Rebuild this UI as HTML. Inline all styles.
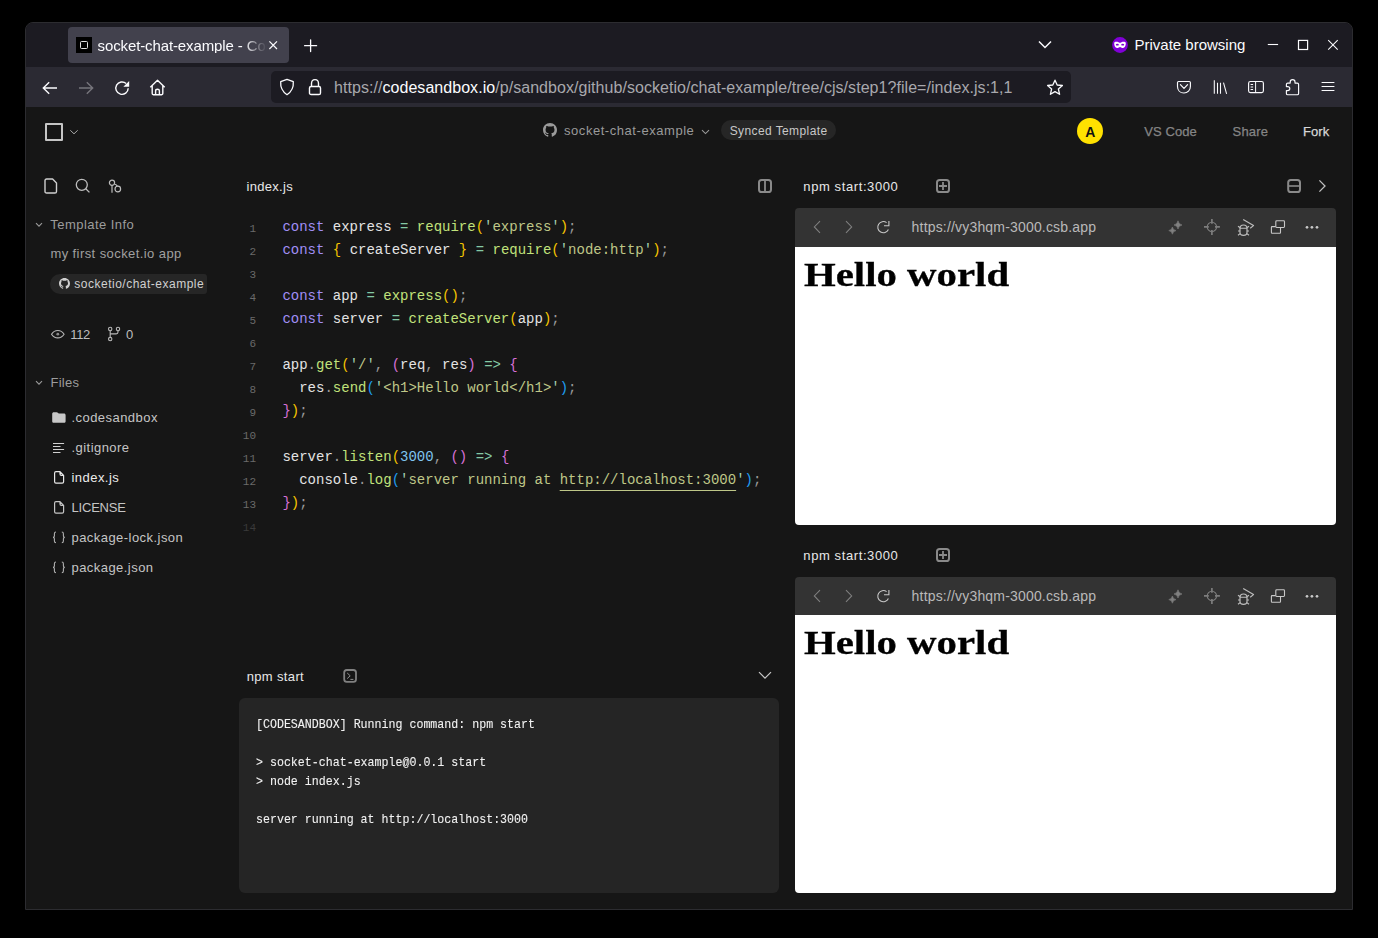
<!DOCTYPE html>
<html><head><meta charset="utf-8"><title>socket-chat-example - CodeSandbox</title>
<style>
html,body{margin:0;padding:0;}
body{width:1378px;height:938px;background:#000;position:relative;overflow:hidden;font-family:"Liberation Sans", sans-serif;}
.t{position:absolute;line-height:1;white-space:pre;}
.r{position:absolute;}
.m{font-family:"Liberation Mono", monospace;}
.s{font-family:"Liberation Serif", serif;}
.i{position:absolute;overflow:visible;}
</style></head><body>
<div class="r" style="left:25px;top:22px;width:1328px;height:888px;background:#161616;border:1px solid #2c2c30;box-sizing:border-box;border-radius:8px 8px 0 0;"></div>
<div class="r" style="left:26px;top:23px;width:1326px;height:44px;background:#1c1b22;border-radius:7px 7px 0 0;"></div>
<div class="r" style="left:26px;top:67px;width:1326px;height:40px;background:#2b2a33;"></div>
<div class="r" style="left:68px;top:27px;width:221px;height:36px;background:#42414d;border-radius:4px;"></div>
<div class="r" style="left:76px;top:37px;width:16px;height:16px;background:#000;"></div>
<div class="r" style="left:80px;top:41px;width:8px;height:8px;background:transparent;border:1.5px solid #e0e0e0;border-radius:1.5px;box-sizing:border-box;"></div>
<div class="t" style="left:97.60px;top:38px;font-size:15px;color:#fbfbfe;letter-spacing:-0.12px;width:169px;overflow:hidden;-webkit-mask-image:linear-gradient(90deg,#000 0,#000 146px,rgba(0,0,0,0.35) 160px,transparent 169px);">socket-chat-example - Cod</div>
<svg class="i" style="left:266px;top:39px;" width="14" height="13" viewBox="266 39 14 13"><path d="M269.4 41.3L277 49M277 41.3L269.4 49" stroke="#fbfbfe" stroke-width="1.2" fill="none"/></svg>
<svg class="i" style="left:302px;top:37px;" width="18" height="18" viewBox="302 37 18 18"><path d="M310.6 39.8V51.6M304.6 45.7H316.6" stroke="#fbfbfe" stroke-width="1.3" stroke-linecap="round" fill="none"/></svg>
<svg class="i" style="left:1038px;top:40px;" width="14" height="9" viewBox="0 0 14 9"><path d="M1 1.5L7 7.5L13 1.5" stroke="#fbfbfe" stroke-width="1.5" fill="none"/></svg>
<svg class="i" style="left:1112px;top:37px;" width="16" height="16" viewBox="0 0 16 16"><circle cx="8" cy="8" r="7.9" fill="#8000d7"/><path d="M2.2 6.3C2.2 5.2 3.2 4.8 4.5 4.8C6 4.8 7 5.5 8 5.9C9 5.5 10 4.8 11.5 4.8C12.8 4.8 13.8 5.2 13.8 6.3C13.8 8.6 12.8 11.1 11 11.1C9.5 11.1 8.8 10 8 10C7.2 10 6.5 11.1 5 11.1C3.2 11.1 2.2 8.6 2.2 6.3Z" fill="#fff"/><ellipse cx="5.3" cy="7.7" rx="1.5" ry="0.85" fill="#8000d7"/><ellipse cx="10.7" cy="7.7" rx="1.5" ry="0.85" fill="#8000d7"/></svg>
<div class="t" style="left:1134.50px;top:37px;font-size:15px;color:#fbfbfe;">Private browsing</div>
<svg class="i" style="left:1265px;top:42px;" width="16" height="5" viewBox="1265 42 16 5"><path d="M1267.8 44.5H1278.1" stroke="#fbfbfe" stroke-width="1.1"/></svg>
<svg class="i" style="left:1296px;top:38px;" width="15" height="15" viewBox="1296 38 15 15"><rect x="1298.5" y="40.4" width="9.1" height="9.1" stroke="#fbfbfe" stroke-width="1.2" fill="none"/></svg>
<svg class="i" style="left:1326px;top:38px;" width="15" height="15" viewBox="1326 38 15 15"><path d="M1328.2 40.2L1337.7 49.7M1337.7 40.2L1328.2 49.7" stroke="#fbfbfe" stroke-width="1.05" fill="none"/></svg>
<svg class="i" style="left:42px;top:81px;" width="16" height="14" viewBox="0 0 16 14"><path d="M15 7H1.8M7.2 1.2L1.3 7L7.2 12.8" stroke="#fbfbfe" stroke-width="1.4" fill="none"/></svg>
<svg class="i" style="left:78px;top:81px;" width="16" height="14" viewBox="0 0 16 14"><path d="M1 7H14.2M8.8 1.2L14.7 7L8.8 12.8" stroke="#76757c" stroke-width="1.4" fill="none"/></svg>
<svg class="i" style="left:114px;top:80px;" width="16" height="16" viewBox="0 0 16 16"><path d="M14.2 8.3A6.2 6.2 0 1 1 12.2 3.6" stroke="#fbfbfe" stroke-width="1.4" fill="none"/><path d="M15.2 1V6.8H9.4Z" fill="#fbfbfe"/></svg>
<svg class="i" style="left:149px;top:79px;" width="17" height="17" viewBox="0 0 17 17"><path d="M1.3 8.2L8.5 1.3L15.7 8.2M3.2 6.6V14.6C3.2 15.3 3.6 15.7 4.3 15.7H12.7C13.4 15.7 13.8 15.3 13.8 14.6V6.6M6.6 15.7V11.8C6.6 10.8 7.4 10.2 8.5 10.2C9.6 10.2 10.4 10.8 10.4 11.8V15.7" stroke="#fbfbfe" stroke-width="1.4" fill="none" stroke-linejoin="round"/></svg>
<div class="r" style="left:271px;top:71px;width:800px;height:32px;background:#1c1b22;border-radius:5px;"></div>
<svg class="i" style="left:279px;top:78px;" width="16" height="18" viewBox="0 0 16 18"><path d="M8 1.3L14.3 3.6C14.7 9 12.6 13.6 8 16.7C3.4 13.6 1.3 9 1.7 3.6Z" stroke="#fbfbfe" stroke-width="1.3" fill="none" stroke-linejoin="round"/></svg>
<svg class="i" style="left:308px;top:78px;" width="14" height="18" viewBox="0 0 14 18"><path d="M3.5 8.6V5.6C3.5 3.2 5 1.6 7 1.6C9 1.6 10.5 3.2 10.5 5.6V8.6" stroke="#fbfbfe" stroke-width="1.4" fill="none"/><rect x="1.5" y="8.5" width="11" height="8" rx="1.6" stroke="#fbfbfe" stroke-width="1.4" fill="none"/></svg>
<div class="t" style="left:334.00px;top:80px;font-size:16px;color:#fbfbfe;letter-spacing:0.05px;"><span style="color:#a8a8ad">https://</span>codesandbox.io<span style="color:#a8a8ad">/p/sandbox/github/socketio/chat-example/tree/cjs/step1?file=/index.js:1,1</span></div>
<svg class="i" style="left:1046px;top:79px;" width="18" height="17" viewBox="0 0 18 17"><path d="M9 1.2L11.2 6L16.4 6.5L12.4 10L13.6 15.3L9 12.6L4.4 15.3L5.6 10L1.6 6.5L6.8 6Z" stroke="#fbfbfe" stroke-width="1.3" fill="none" stroke-linejoin="round"/></svg>
<svg class="i" style="left:1174px;top:78px;" width="20" height="18" viewBox="1174 78 20 18"><path d="M1178.6 81.5H1189.3C1190 81.5 1190.4 81.9 1190.4 82.6V86.4C1190.4 90.3 1187.6 93 1183.9 93C1180.2 93 1177.5 90.3 1177.5 86.4V82.6C1177.5 81.9 1177.9 81.5 1178.6 81.5Z" stroke="#fbfbfe" stroke-width="1.15" fill="none"/><path d="M1180.4 84.6L1184 88.4L1187.6 84.6" stroke="#fbfbfe" stroke-width="1.15" fill="none" stroke-linecap="round"/></svg>
<svg class="i" style="left:1212px;top:78px;" width="18" height="18" viewBox="1212 78 18 18"><path d="M1214.3 80.2V93.8M1217.5 82.8V93.8M1220.5 82.8V93.8M1223.5 82.6L1226.6 93.8" stroke="#fbfbfe" stroke-width="1.05" fill="none"/></svg>
<svg class="i" style="left:1246px;top:79px;" width="20" height="16" viewBox="1246 79 20 16"><rect x="1248.6" y="81.5" width="14.8" height="11.1" rx="1.8" stroke="#fbfbfe" stroke-width="1.15" fill="none"/><path d="M1255.6 81.5V92.6M1250.6 84.5H1253.1M1250.6 87H1253.1M1250.6 89.5H1253.1" stroke="#fbfbfe" stroke-width="1" fill="none"/></svg>
<svg class="i" style="left:1284px;top:77px;" width="17" height="20" viewBox="1284 77 17 20"><path d="M1290.2 83.1V81.9C1290.2 80.5 1291.2 79.6 1292.6 79.6C1294 79.6 1295 80.5 1295 81.9V83.1H1297.3C1298.1 83.1 1298.6 83.6 1298.6 84.4V93.4C1298.6 94.2 1298.1 94.7 1297.3 94.7H1287.7C1286.9 94.7 1286.4 94.2 1286.4 93.4V90.6H1287.6C1288.9 90.6 1289.8 89.7 1289.8 88.6C1289.8 87.5 1288.9 86.6 1287.6 86.6H1286.4V84.4C1286.4 83.6 1286.9 83.1 1287.7 83.1Z" stroke="#fbfbfe" stroke-width="1.15" fill="none" stroke-linejoin="round"/></svg>
<svg class="i" style="left:1320px;top:80px;" width="16" height="13" viewBox="1320 80 16 13"><path d="M1322 82.5H1334M1322 86.5H1334M1322 90.5H1334" stroke="#fbfbfe" stroke-width="1.1" stroke-linecap="round"/></svg>
<div class="r" style="left:45px;top:123px;width:18px;height:18px;background:transparent;border:2px solid #c5c5c5;box-sizing:border-box;border-radius:1px;"></div>
<svg class="i" style="left:68px;top:127px;" width="12" height="10" viewBox="68 127 12 10"><path d="M70.3 130.3L74 133.8L77.7 130.3" stroke="#b0b0b0" stroke-width="0.95" fill="none"/></svg>
<svg class="i" style="left:543px;top:123px;" width="14" height="14" viewBox="0 0 16 16"><path fill="#9a9a9a" d="M8 0C3.58 0 0 3.58 0 8c0 3.54 2.29 6.53 5.47 7.59.4.07.55-.17.55-.38 0-.19-.01-.82-.01-1.49-2.01.37-2.53-.49-2.69-.94-.09-.23-.48-.94-.82-1.13-.28-.15-.68-.52-.01-.53.63-.01 1.08.58 1.23.82.72 1.21 1.87.87 2.33.66.07-.52.28-.87.51-1.07-1.78-.2-3.640-.89-3.64-3.95 0-.87.31-1.59.82-2.15-.08-.2-.36-1.02.08-2.12 0 0 .67-.21 2.2.82.64-.18 1.32-.27 2-.27.68 0 1.36.09 2 .27 1.53-1.040 2.2-.82 2.2-.82.44 1.1.16 1.92.08 2.12.51.56.82 1.27.82 2.15 0 3.07-1.87 3.75-3.65 3.95.29.25.54.73.54 1.48 0 1.07-.01 1.93-.01 2.2 0 .21.15.46.55.38A8.013 8.013 0 0016 8c0-4.42-3.58-8-8-8z"/></svg>
<div class="t" style="left:564.00px;top:124px;font-size:13px;color:#9a9a9a;letter-spacing:0.55px;">socket-chat-example</div>
<svg class="i" style="left:701px;top:129px;" width="9" height="6" viewBox="0 0 9 6"><path d="M1 1.2L4.5 4.6L8 1.2" stroke="#999" stroke-width="1.1" fill="none"/></svg>
<div class="r" style="left:721px;top:120px;width:115px;height:20px;background:#262626;border-radius:10px;"></div>
<div class="t" style="left:729.70px;top:125px;font-size:12px;color:#c8c8c8;letter-spacing:0.4px;">Synced Template</div>
<div class="r" style="left:1077px;top:118px;width:26px;height:26px;border-radius:13px;background:#ffe100;"></div>
<div class="t" style="left:1085.20px;top:125px;font-size:14px;color:#111;font-weight:700;">A</div>
<div class="t" style="left:1144.20px;top:125px;font-size:13px;color:#858585;letter-spacing:0.1px;-webkit-text-stroke:0.25px #858585;">VS Code</div>
<div class="t" style="left:1232.60px;top:125px;font-size:13px;color:#858585;letter-spacing:0.15px;-webkit-text-stroke:0.25px #858585;">Share</div>
<div class="t" style="left:1303.00px;top:125px;font-size:13px;color:#d6d6d6;letter-spacing:0.05px;-webkit-text-stroke:0.25px #d6d6d6;">Fork</div>
<svg class="i" style="left:44px;top:178px;" width="14" height="16" viewBox="0 0 14 16"><path d="M2.6 1H8.6L12.5 4.9V13.4C12.5 14.4 11.9 15 10.9 15H2.6C1.6 15 1 14.4 1 13.4V2.6C1 1.6 1.6 1 2.6 1Z" stroke="#cfcfcf" stroke-width="1.4" fill="none" stroke-linejoin="round"/></svg>
<svg class="i" style="left:75px;top:178px;" width="16" height="16" viewBox="0 0 16 16"><circle cx="6.8" cy="6.8" r="5.5" stroke="#bdbdbd" stroke-width="1.3" fill="none"/><path d="M10.8 10.8L14.4 14.4" stroke="#bdbdbd" stroke-width="1.3"/></svg>
<svg class="i" style="left:108px;top:179px;" width="15" height="15" viewBox="0 0 15 15"><circle cx="4" cy="3.8" r="2.6" stroke="#bdbdbd" stroke-width="1.2" fill="none"/><circle cx="9.8" cy="10" r="2.8" stroke="#bdbdbd" stroke-width="1.2" fill="none"/><path d="M4 6.4V13.8M6.4 5C8 5.5 9 6.5 9.3 7.2" stroke="#bdbdbd" stroke-width="1.2" fill="none"/></svg>
<svg class="i" style="left:34.5px;top:221.5px;" width="8" height="6" viewBox="0 0 8 6"><path d="M1 1.2L4 4.2L7 1.2" stroke="#9a9a9a" stroke-width="1.1" fill="none"/></svg>
<div class="t" style="left:50.30px;top:218px;font-size:13px;color:#9c9c9c;letter-spacing:0.45px;">Template Info</div>
<div class="t" style="left:50.40px;top:247px;font-size:13px;color:#a0a0a0;letter-spacing:0.42px;">my first socket.io app</div>
<div class="r" style="left:50px;top:274px;width:157px;height:20px;background:#262626;border-radius:10px 3px 3px 10px;"></div>
<svg class="i" style="left:58.5px;top:278px;" width="11" height="11" viewBox="0 0 16 16"><path fill="#cfcfcf" d="M8 0C3.58 0 0 3.58 0 8c0 3.54 2.29 6.53 5.47 7.59.4.07.55-.17.55-.38 0-.19-.01-.82-.01-1.49-2.01.37-2.53-.49-2.69-.94-.09-.23-.48-.94-.82-1.13-.28-.15-.68-.52-.01-.53.63-.01 1.08.58 1.23.82.72 1.21 1.87.87 2.33.66.07-.52.28-.87.51-1.07-1.78-.2-3.640-.89-3.64-3.95 0-.87.31-1.59.82-2.15-.08-.2-.36-1.02.08-2.12 0 0 .67-.21 2.2.82.64-.18 1.32-.27 2-.27.68 0 1.36.09 2 .27 1.53-1.040 2.2-.82 2.2-.82.44 1.1.16 1.92.08 2.12.51.56.82 1.27.82 2.15 0 3.07-1.87 3.75-3.65 3.95.29.25.54.73.54 1.48 0 1.07-.01 1.93-.01 2.2 0 .21.15.46.55.38A8.013 8.013 0 0016 8c0-4.42-3.58-8-8-8z"/></svg>
<div class="t" style="left:74.30px;top:278px;font-size:12px;color:#d0d0d0;letter-spacing:0.5px;">socketio/chat-example</div>
<svg class="i" style="left:50px;top:328px;" width="16" height="13" viewBox="50 328 16 13"><path d="M51.5 334.2C53.2 331.6 55.2 330.5 57.8 330.5C60.4 330.5 62.4 331.6 64.1 334.2C62.4 336.8 60.4 337.9 57.8 337.9C55.2 337.9 53.2 336.8 51.5 334.2Z" stroke="#b5b5b5" stroke-width="1.1" fill="none"/><circle cx="57.8" cy="334.2" r="1.4" fill="#8a8a8a"/></svg>
<div class="t" style="left:70.30px;top:328px;font-size:13px;color:#bdbdbd;letter-spacing:-0.4px;">112</div>
<svg class="i" style="left:106px;top:325px;" width="16" height="18" viewBox="106 325 16 18"><circle cx="110.2" cy="329" r="1.7" stroke="#b8b8b8" stroke-width="1.1" fill="none"/><circle cx="118" cy="329" r="1.7" stroke="#b8b8b8" stroke-width="1.1" fill="none"/><circle cx="110.2" cy="339.1" r="1.7" stroke="#b8b8b8" stroke-width="1.1" fill="none"/><path d="M110.2 330.7V337.4M118 330.7V332C118 333.2 117.4 333.9 116.2 333.9H110.2" stroke="#b8b8b8" stroke-width="1.1" fill="none"/></svg>
<div class="t" style="left:126.00px;top:328px;font-size:13px;color:#bdbdbd;">0</div>
<svg class="i" style="left:34.5px;top:379.5px;" width="8" height="6" viewBox="0 0 8 6"><path d="M1 1.2L4 4.2L7 1.2" stroke="#9a9a9a" stroke-width="1.1" fill="none"/></svg>
<div class="t" style="left:50.40px;top:376px;font-size:13px;color:#9c9c9c;letter-spacing:0.3px;">Files</div>
<svg class="i" style="left:50px;top:410px;" width="18" height="16" viewBox="50 410 18 16"><path d="M53.8 412.2H56.6C57.2 412.2 57.5 412.4 57.9 412.8L58.7 413.6H64C64.9 413.6 65.6 414.3 65.6 415.2V421.2C65.6 422.1 64.9 422.8 64 422.8H53.8C52.9 422.8 52.2 422.1 52.2 421.2V413.8C52.2 412.9 52.9 412.2 53.8 412.2Z" fill="#c8c8c8"/></svg>
<div class="t" style="left:71.50px;top:411px;font-size:13px;color:#c5c5c5;letter-spacing:0.45px;">.codesandbox</div>
<svg class="i" style="left:50px;top:440px;" width="18" height="16" viewBox="50 440 18 16"><path d="M53 443.5H64.1M53 446.5H60.5M53 449.5H64.1M53 452.5H60.5" stroke="#d0d0d0" stroke-width="1"/></svg>
<div class="t" style="left:71.50px;top:441px;font-size:13px;color:#c5c5c5;letter-spacing:0.45px;">.gitignore</div>
<svg class="i" style="left:50px;top:468px;" width="18" height="18" viewBox="50 468 18 18"><path d="M56 471.7H60L63.6 475.3V481.8C63.6 482.7 63.1 483.2 62.2 483.2H56C55.1 483.2 54.6 482.7 54.6 481.8V473.1C54.6 472.2 55.1 471.7 56 471.7Z M60 471.7V474C60 474.8 60.5 475.3 61.3 475.3H63.6" stroke="#e6e6e6" stroke-width="1.2" fill="none" stroke-linejoin="round"/></svg>
<div class="t" style="left:71.50px;top:471px;font-size:13px;color:#ececec;letter-spacing:0.45px;">index.js</div>
<svg class="i" style="left:50px;top:498px;" width="18" height="18" viewBox="50 498 18 18"><path d="M56 501.7H60L63.6 505.3V511.8C63.6 512.7 63.1 513.2 62.2 513.2H56C55.1 513.2 54.6 512.7 54.6 511.8V503.1C54.6 502.2 55.1 501.7 56 501.7Z M60 501.7V504C60 504.8 60.5 505.3 61.3 505.3H63.6" stroke="#c4c4c4" stroke-width="1.2" fill="none" stroke-linejoin="round"/></svg>
<div class="t" style="left:71.50px;top:501px;font-size:13px;color:#c5c5c5;letter-spacing:-0.2px;">LICENSE</div>
<svg class="i" style="left:50px;top:530px;" width="18" height="16" viewBox="50 530 18 16"><path d="M56 532C54.6 532 54.4 532.5 54.4 533.7V536.1C54.4 537 54 537.4 53 537.4C54 537.4 54.4 537.8 54.4 538.7V541.1C54.4 542.3 54.6 542.8 56 542.8M61.8 532C63.2 532 63.4 532.5 63.4 533.7V536.1C63.4 537 63.8 537.4 64.8 537.4C63.8 537.4 63.4 537.8 63.4 538.7V541.1C63.4 542.3 63.2 542.8 61.8 542.8" stroke="#b0b0b0" stroke-width="1.1" fill="none"/></svg>
<div class="t" style="left:71.50px;top:531px;font-size:13px;color:#c5c5c5;letter-spacing:0.45px;">package-lock.json</div>
<svg class="i" style="left:50px;top:560px;" width="18" height="16" viewBox="50 560 18 16"><path d="M56 562C54.6 562 54.4 562.5 54.4 563.7V566.1C54.4 567 54 567.4 53 567.4C54 567.4 54.4 567.8 54.4 568.7V571.1C54.4 572.3 54.6 572.8 56 572.8M61.8 562C63.2 562 63.4 562.5 63.4 563.7V566.1C63.4 567 63.8 567.4 64.8 567.4C63.8 567.4 63.4 567.8 63.4 568.7V571.1C63.4 572.3 63.2 572.8 61.8 572.8" stroke="#b0b0b0" stroke-width="1.1" fill="none"/></svg>
<div class="t" style="left:71.50px;top:561px;font-size:13px;color:#c5c5c5;letter-spacing:0.45px;">package.json</div>
<div class="t" style="left:246.50px;top:180px;font-size:13px;color:#e8e8e8;letter-spacing:0.3px;">index.js</div>
<svg class="i" style="left:756px;top:177px;" width="18" height="18" viewBox="756 177 18 18"><rect x="759" y="180" width="12" height="12" rx="2.6" stroke="#8a8a8a" stroke-width="2" fill="none"/><path d="M765 180V192" stroke="#8a8a8a" stroke-width="1.8"/></svg>
<div class="t m" style="left:249.40px;top:224px;font-size:11px;color:#6a6a6a;">1</div>
<div class="t m" style="left:282.40px;top:220px;font-size:14px;color:#e3e3e3;"><span style="color:#a08ef5">const</span> <span style="color:#e3e3e3">express</span> <span style="color:#84c9a5">=</span> <span style="color:#c1e27b">require</span><span style="color:#f5c400">(</span><span style="color:#a3cfae">'</span><span style="color:#bfc788">express</span><span style="color:#a3cfae">'</span><span style="color:#f5c400">)</span><span style="color:#9a9a9a">;</span></div>
<div class="t m" style="left:249.40px;top:247px;font-size:11px;color:#6a6a6a;">2</div>
<div class="t m" style="left:282.40px;top:243px;font-size:14px;color:#e3e3e3;"><span style="color:#a08ef5">const</span> <span style="color:#f5c400">{</span> <span style="color:#e3e3e3">createServer</span> <span style="color:#f5c400">}</span> <span style="color:#84c9a5">=</span> <span style="color:#c1e27b">require</span><span style="color:#f5c400">(</span><span style="color:#a3cfae">'</span><span style="color:#bfc788">node:http</span><span style="color:#a3cfae">'</span><span style="color:#f5c400">)</span><span style="color:#9a9a9a">;</span></div>
<div class="t m" style="left:249.40px;top:270px;font-size:11px;color:#6a6a6a;">3</div>
<div class="t m" style="left:249.40px;top:293px;font-size:11px;color:#6a6a6a;">4</div>
<div class="t m" style="left:282.40px;top:289px;font-size:14px;color:#e3e3e3;"><span style="color:#a08ef5">const</span> <span style="color:#e3e3e3">app</span> <span style="color:#84c9a5">=</span> <span style="color:#c1e27b">express</span><span style="color:#f5c400">()</span><span style="color:#9a9a9a">;</span></div>
<div class="t m" style="left:249.40px;top:316px;font-size:11px;color:#6a6a6a;">5</div>
<div class="t m" style="left:282.40px;top:312px;font-size:14px;color:#e3e3e3;"><span style="color:#a08ef5">const</span> <span style="color:#e3e3e3">server</span> <span style="color:#84c9a5">=</span> <span style="color:#c1e27b">createServer</span><span style="color:#f5c400">(</span><span style="color:#e3e3e3">app</span><span style="color:#f5c400">)</span><span style="color:#9a9a9a">;</span></div>
<div class="t m" style="left:249.40px;top:339px;font-size:11px;color:#6a6a6a;">6</div>
<div class="t m" style="left:249.40px;top:362px;font-size:11px;color:#6a6a6a;">7</div>
<div class="t m" style="left:282.40px;top:358px;font-size:14px;color:#e3e3e3;"><span style="color:#e3e3e3">app</span><span style="color:#9a9a9a">.</span><span style="color:#c1e27b">get</span><span style="color:#f5c400">(</span><span style="color:#a3cfae">'</span><span style="color:#bfc788">/</span><span style="color:#a3cfae">'</span><span style="color:#9a9a9a">,</span> <span style="color:#d670d6">(</span><span style="color:#e3e3e3">req</span><span style="color:#9a9a9a">,</span> <span style="color:#e3e3e3">res</span><span style="color:#d670d6">)</span> <span style="color:#84c9a5">=&gt;</span> <span style="color:#d670d6">{</span></div>
<div class="t m" style="left:249.40px;top:385px;font-size:11px;color:#6a6a6a;">8</div>
<div class="t m" style="left:282.40px;top:381px;font-size:14px;color:#e3e3e3;">  <span style="color:#e3e3e3">res</span><span style="color:#9a9a9a">.</span><span style="color:#c1e27b">send</span><span style="color:#1f9cf0">(</span><span style="color:#a3cfae">'</span><span style="color:#bfc788">&lt;h1&gt;Hello world&lt;/h1&gt;</span><span style="color:#a3cfae">'</span><span style="color:#1f9cf0">)</span><span style="color:#9a9a9a">;</span></div>
<div class="t m" style="left:249.40px;top:408px;font-size:11px;color:#6a6a6a;">9</div>
<div class="t m" style="left:282.40px;top:404px;font-size:14px;color:#e3e3e3;"><span style="color:#d670d6">}</span><span style="color:#f5c400">)</span><span style="color:#9a9a9a">;</span></div>
<div class="t m" style="left:242.80px;top:431px;font-size:11px;color:#6a6a6a;">10</div>
<div class="t m" style="left:242.80px;top:454px;font-size:11px;color:#6a6a6a;">11</div>
<div class="t m" style="left:282.40px;top:450px;font-size:14px;color:#e3e3e3;"><span style="color:#e3e3e3">server</span><span style="color:#9a9a9a">.</span><span style="color:#c1e27b">listen</span><span style="color:#f5c400">(</span><span style="color:#7fc4f0">3000</span><span style="color:#9a9a9a">,</span> <span style="color:#d670d6">()</span> <span style="color:#84c9a5">=&gt;</span> <span style="color:#d670d6">{</span></div>
<div class="t m" style="left:242.80px;top:477px;font-size:11px;color:#6a6a6a;">12</div>
<div class="t m" style="left:282.40px;top:473px;font-size:14px;color:#e3e3e3;">  <span style="color:#e3e3e3">console</span><span style="color:#9a9a9a">.</span><span style="color:#c1e27b">log</span><span style="color:#1f9cf0">(</span><span style="color:#a3cfae">'</span><span style="color:#bfc788">server running at </span><span style="color:#bfc788;text-decoration:underline;text-underline-offset:5.5px">http://localhost:3000</span><span style="color:#a3cfae">'</span><span style="color:#1f9cf0">)</span><span style="color:#9a9a9a">;</span></div>
<div class="t m" style="left:242.80px;top:500px;font-size:11px;color:#6a6a6a;">13</div>
<div class="t m" style="left:282.40px;top:496px;font-size:14px;color:#e3e3e3;"><span style="color:#d670d6">}</span><span style="color:#f5c400">)</span><span style="color:#9a9a9a">;</span></div>
<div class="t m" style="left:242.80px;top:523px;font-size:11px;color:#3a3a3a;">14</div>
<div class="t" style="left:246.70px;top:670px;font-size:13px;color:#e8e8e8;letter-spacing:0.35px;">npm start</div>
<svg class="i" style="left:341px;top:667px;" width="18" height="18" viewBox="341 667 18 18"><rect x="344.2" y="670" width="11.8" height="11.8" rx="2.6" stroke="#808080" stroke-width="1.8" fill="none"/><path d="M347.2 673L350.2 675.8L347.2 678.6M350.4 679.4H353.4" stroke="#909090" stroke-width="1" fill="none"/></svg>
<svg class="i" style="left:758px;top:671px;" width="14" height="9" viewBox="0 0 14 9"><path d="M1 1.2L7 7.2L13 1.2" stroke="#c8c8c8" stroke-width="1.2" fill="none"/></svg>
<div class="r" style="left:239px;top:698px;width:540px;height:195px;background:#252525;border-radius:6px;"></div>
<div class="t m" style="left:255.60px;top:718px;font-size:13.6px;color:#f2f2f2;transform:scaleX(0.855);transform-origin:0 0;-webkit-text-stroke:0.1px #f2f2f2;">[CODESANDBOX] Running command: npm start</div>
<div class="t m" style="left:255.60px;top:756px;font-size:13.6px;color:#f2f2f2;transform:scaleX(0.855);transform-origin:0 0;-webkit-text-stroke:0.1px #f2f2f2;">&gt; socket-chat-example@0.0.1 start</div>
<div class="t m" style="left:255.60px;top:775px;font-size:13.6px;color:#f2f2f2;transform:scaleX(0.855);transform-origin:0 0;-webkit-text-stroke:0.1px #f2f2f2;">&gt; node index.js</div>
<div class="t m" style="left:255.60px;top:813px;font-size:13.6px;color:#f2f2f2;transform:scaleX(0.855);transform-origin:0 0;-webkit-text-stroke:0.1px #f2f2f2;">server running at http://localhost:3000</div>
<div class="t" style="left:803.30px;top:180px;font-size:13px;color:#e8e8e8;letter-spacing:0.6px;">npm start:3000</div>
<svg class="i" style="left:934px;top:177px;" width="18" height="18" viewBox="934 177 18 18"><rect x="937" y="180" width="12" height="12" rx="2.6" stroke="#8a8a8a" stroke-width="2" fill="none"/><path d="M943 182V190M939 186H947" stroke="#8a8a8a" stroke-width="1.8"/></svg>
<svg class="i" style="left:1285px;top:177px;" width="18" height="18" viewBox="1285 177 18 18"><rect x="1288.2" y="180" width="11.8" height="12" rx="2.6" stroke="#8a8a8a" stroke-width="2" fill="none"/><path d="M1288.2 186H1300" stroke="#8a8a8a" stroke-width="1.6"/></svg>
<svg class="i" style="left:1316px;top:177px;" width="12" height="18" viewBox="1316 177 12 18"><path d="M1319.4 180.4L1325 186L1319.4 191.6" stroke="#c0c0c0" stroke-width="1.3" fill="none"/></svg>
<div class="r" style="left:795px;top:208px;width:541px;height:39px;background:#333333;border-radius:4px 4px 0 0;"></div>
<div class="r" style="left:795px;top:247px;width:541px;height:278px;background:#ffffff;border-radius:0 0 4px 4px;"></div>
<svg class="i" style="left:810px;top:218px;" width="46" height="18" viewBox="810 218 46 18"><path d="M820 221.2L814.3 226.9L820 232.9M846 221.2L851.7 226.9L846 232.9" stroke="#808080" stroke-width="1.05" fill="none"/></svg>
<svg class="i" style="left:874px;top:218px;" width="18" height="18" viewBox="874 218 18 18"><path d="M888.4 229.6A5.6 5.6 0 1 1 886.6 222.6" stroke="#c8c8c8" stroke-width="1.1" fill="none"/><path d="M888.9 220.9V225.8H884" stroke="#c8c8c8" stroke-width="1.1" fill="none"/></svg>
<div class="t" style="left:911.60px;top:220px;font-size:14px;color:#b9b9b9;letter-spacing:0.18px;">https://vy3hqm-3000.csb.app</div>
<svg class="i" style="left:1166px;top:218px;" width="20" height="20" viewBox="1166 218 20 20"><path d="M1178 220.8Q1178.6 224.4 1182 225Q1178.6 225.6 1178 229Q1177.4 225.6 1174 225Q1177.4 224.4 1178 220.8Z M1172.4 227Q1172.9 230 1176 230.6Q1172.9 231.2 1172.4 234.2Q1171.9 231.2 1168.8 230.6Q1171.9 230 1172.4 227Z" fill="#808080" stroke="#808080" stroke-width="0.6" stroke-linejoin="round"/></svg>
<svg class="i" style="left:1202px;top:217px;" width="20" height="20" viewBox="1202 217 20 20"><circle cx="1211.9" cy="226.9" r="4.7" stroke="#7d7d7d" stroke-width="1.1" fill="none"/><path d="M1211.9 219V223.8M1211.9 230V234.9M1204 226.9H1208.8M1215 226.9H1219.9" stroke="#7d7d7d" stroke-width="1.7"/></svg>
<svg class="i" style="left:1236px;top:217px;" width="20" height="20" viewBox="1236 217 20 20"><path d="M1243.2 219.6L1253.5 225.6L1250.2 228.2" stroke="#bdbdbd" stroke-width="1.2" fill="none" stroke-linejoin="round"/><path d="M1240 228.2C1240 226.2 1241.6 225 1243.5 225C1245.4 225 1247 226.2 1247 228.2V232.5C1247 234.4 1245.4 235.3 1243.5 235.3C1241.6 235.3 1240 234.4 1240 232.5Z" stroke="#bdbdbd" stroke-width="1.2" fill="none"/><path d="M1240 228.2H1247M1238 226.2L1240.2 227.8M1238 231H1240M1238 235.3L1240.2 233.6M1249 226.2L1246.8 227.8M1249 231H1247M1249 235.3L1246.8 233.6" stroke="#bdbdbd" stroke-width="1.1" fill="none"/></svg>
<svg class="i" style="left:1269px;top:218px;" width="18" height="17" viewBox="1269 218 18 17"><path d="M1275.6 226.6H1272C1271.5 226.6 1271.4 226.8 1271.4 227.3V232.6C1271.4 233.1 1271.5 233.3 1272 233.3H1279.9C1280.4 233.3 1280.5 233.1 1280.5 232.6V228" stroke="#c8c8c8" stroke-width="1.1" fill="none"/><rect x="1275.8" y="220.8" width="8.7" height="6.7" rx="0.9" stroke="#c8c8c8" stroke-width="1.1" fill="none"/></svg>
<svg class="i" style="left:1304px;top:224px;" width="16" height="6" viewBox="1304 224 16 6"><circle cx="1307" cy="227.3" r="1.35" fill="#c8c8c8"/><circle cx="1311.9" cy="227.3" r="1.35" fill="#c8c8c8"/><circle cx="1317" cy="227.3" r="1.35" fill="#c8c8c8"/></svg>
<div class="t s" style="left:803.90px;top:258px;font-size:34px;color:#000;font-weight:700;transform:scaleX(1.2);transform-origin:0 0;-webkit-text-stroke:0.3px #000;">Hello world</div>
<div class="t" style="left:803.30px;top:549px;font-size:13px;color:#e8e8e8;letter-spacing:0.6px;">npm start:3000</div>
<svg class="i" style="left:934px;top:546px;" width="18" height="18" viewBox="934 546 18 18"><rect x="937" y="549" width="12" height="12" rx="2.6" stroke="#8a8a8a" stroke-width="2" fill="none"/><path d="M943 551V559M939 555H947" stroke="#8a8a8a" stroke-width="1.8"/></svg>
<div class="r" style="left:795px;top:577px;width:541px;height:38px;background:#333333;border-radius:4px 4px 0 0;"></div>
<div class="r" style="left:795px;top:615px;width:541px;height:278px;background:#ffffff;border-radius:0 0 4px 4px;"></div>
<svg class="i" style="left:810px;top:587px;" width="46" height="18" viewBox="810 587 46 18"><path d="M820 590.2L814.3 595.9L820 601.9M846 590.2L851.7 595.9L846 601.9" stroke="#808080" stroke-width="1.05" fill="none"/></svg>
<svg class="i" style="left:874px;top:587px;" width="18" height="18" viewBox="874 587 18 18"><path d="M888.4 598.6A5.6 5.6 0 1 1 886.6 591.6" stroke="#c8c8c8" stroke-width="1.1" fill="none"/><path d="M888.9 589.9V594.8H884" stroke="#c8c8c8" stroke-width="1.1" fill="none"/></svg>
<div class="t" style="left:911.60px;top:589px;font-size:14px;color:#b9b9b9;letter-spacing:0.18px;">https://vy3hqm-3000.csb.app</div>
<svg class="i" style="left:1166px;top:587px;" width="20" height="20" viewBox="1166 587 20 20"><path d="M1178 589.8Q1178.6 593.4 1182 594Q1178.6 594.6 1178 598Q1177.4 594.6 1174 594Q1177.4 593.4 1178 589.8Z M1172.4 596Q1172.9 599 1176 599.6Q1172.9 600.2 1172.4 603.2Q1171.9 600.2 1168.8 599.6Q1171.9 599 1172.4 596Z" fill="#808080" stroke="#808080" stroke-width="0.6" stroke-linejoin="round"/></svg>
<svg class="i" style="left:1202px;top:586px;" width="20" height="20" viewBox="1202 586 20 20"><circle cx="1211.9" cy="595.9" r="4.7" stroke="#7d7d7d" stroke-width="1.1" fill="none"/><path d="M1211.9 588V592.8M1211.9 599V603.9M1204 595.9H1208.8M1215 595.9H1219.9" stroke="#7d7d7d" stroke-width="1.7"/></svg>
<svg class="i" style="left:1236px;top:586px;" width="20" height="20" viewBox="1236 586 20 20"><path d="M1243.2 588.6L1253.5 594.6L1250.2 597.2" stroke="#bdbdbd" stroke-width="1.2" fill="none" stroke-linejoin="round"/><path d="M1240 597.2C1240 595.2 1241.6 594 1243.5 594C1245.4 594 1247 595.2 1247 597.2V601.5C1247 603.4 1245.4 604.3 1243.5 604.3C1241.6 604.3 1240 603.4 1240 601.5Z" stroke="#bdbdbd" stroke-width="1.2" fill="none"/><path d="M1240 597.2H1247M1238 595.2L1240.2 596.8M1238 600H1240M1238 604.3L1240.2 602.6M1249 595.2L1246.8 596.8M1249 600H1247M1249 604.3L1246.8 602.6" stroke="#bdbdbd" stroke-width="1.1" fill="none"/></svg>
<svg class="i" style="left:1269px;top:587px;" width="18" height="17" viewBox="1269 587 18 17"><path d="M1275.6 595.6H1272C1271.5 595.6 1271.4 595.8 1271.4 596.3V601.6C1271.4 602.1 1271.5 602.3 1272 602.3H1279.9C1280.4 602.3 1280.5 602.1 1280.5 601.6V597" stroke="#c8c8c8" stroke-width="1.1" fill="none"/><rect x="1275.8" y="589.8" width="8.7" height="6.7" rx="0.9" stroke="#c8c8c8" stroke-width="1.1" fill="none"/></svg>
<svg class="i" style="left:1304px;top:593px;" width="16" height="6" viewBox="1304 593 16 6"><circle cx="1307" cy="596.3" r="1.35" fill="#c8c8c8"/><circle cx="1311.9" cy="596.3" r="1.35" fill="#c8c8c8"/><circle cx="1317" cy="596.3" r="1.35" fill="#c8c8c8"/></svg>
<div class="t s" style="left:803.90px;top:626px;font-size:34px;color:#000;font-weight:700;transform:scaleX(1.2);transform-origin:0 0;-webkit-text-stroke:0.3px #000;">Hello world</div>
</body></html>
